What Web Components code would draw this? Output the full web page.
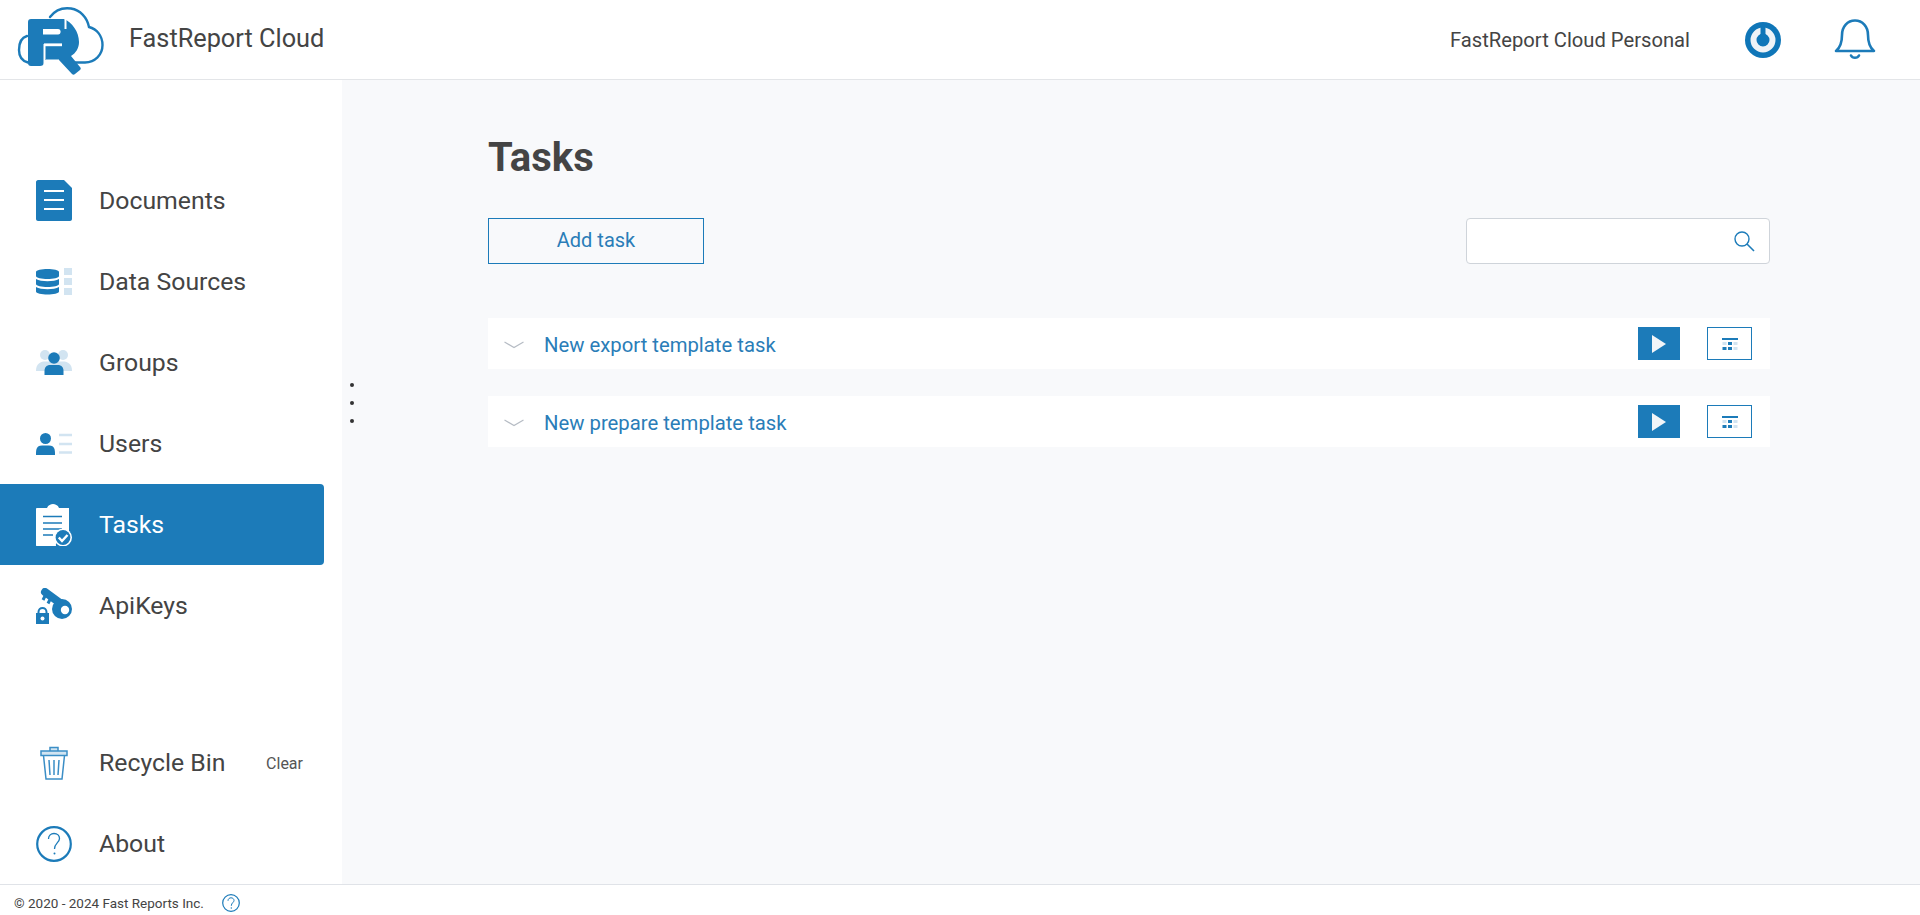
<!DOCTYPE html>
<html lang="en">
<head>
<meta charset="utf-8">
<title>FastReport Cloud</title>
<style>
  html, body { margin: 0; height: 100%; }
  body { font-family: Roboto, "Liberation Sans", sans-serif; color: #444; overflow: hidden; }
  svg { display: block; }
</style>
</head>
<body>
<fr-app>
  <fr-header slot="header" product="FastReport Cloud" plan="FastReport Cloud Personal">
    <svg slot="logo" width="110" height="80" viewBox="0 0 110 80">
      <path d="M27 36 C20 38 19 44 19 50 C19 56 22 61 28 62.500 M50 17 C56 9 64 7.500 71 8.500 C80 10 87 17 89 27 C97 29 102.500 36 102.500 45 C102.500 55 95 62 85 62.500 L75 62.500" fill="none" stroke="#1c7bb9" stroke-width="2.400" stroke-linecap="round"/>
      <path d="M31 19 H64 C72 22 79 32 79 42 C79 48 76 53 71 56 L80 67 C81 68 81 69 80 70 L75 74 C74 75 73 75 72 74 L59 60 H44 V63 C44 65 42 66 40 66 H31 C29 66 28 65 28 63 V22 C28 20 29 19 31 19 Z" fill="#1c7bb9"/>
      <path d="M43 29 H58 C61.500 29 61.500 34.500 58 34.500 H43 Z" fill="#fff"/>
      <path d="M44 44.800 H62" fill="none" stroke="#fff" stroke-width="2.800"/>
      <path d="M44.500 44 V66 M65.500 18 V29 M46 60.500 H59" fill="none" stroke="#fff" stroke-width="2"/>
    </svg>
    <svg slot="power" width="38" height="38" viewBox="0 0 38 38">
      <circle cx="19" cy="19" r="18" fill="#0f76b8"/>
      <circle cx="19" cy="19" r="9.500" fill="none" stroke="#eef3f7" stroke-width="6"/>
      <path d="M19 5 V19" stroke="#0f76b8" stroke-width="5"/>
    </svg>
    <svg slot="bell" width="42" height="42" viewBox="0 0 42 42">
      <path d="M2 32 C7 28 8 23 8 16 C8 7.500 13.500 1.500 21 1.500 C28.500 1.500 34 7.500 34 16 C34 23 35 28 40 32 Z" fill="none" stroke="#1c7bb9" stroke-width="2.600" stroke-linejoin="round"/>
      <path d="M17 36.500 C18.500 39.500 23.500 39.500 25 36.500" fill="none" stroke="#1c7bb9" stroke-width="2.600" stroke-linecap="round"/>
    </svg>
  </fr-header>

  <fr-sidebar slot="sidebar">
    <fr-nav-item label="Documents">
      <svg slot="icon" width="36" height="41" viewBox="0 0 36 41">
        <path d="M2 0 H28 L36 8 V39 C36 40 35 41 34 41 H2 C1 41 0 40 0 39 V2 C0 1 1 0 2 0 Z" fill="#1c7bb9"/>
        <path d="M8 11 H28 M8 20 H28 M8 29 H28" stroke="#fff" stroke-width="2"/>
      </svg>
    </fr-nav-item>
    <fr-nav-item label="Data Sources">
      <svg slot="icon" width="36" height="28" viewBox="0 0 36 28">
        <path d="M0 4 C0 0 23 0 23 4 V8 C23 12 0 12 0 8 Z M0 11 C5 14 18 14 23 11 V16 C23 20 0 20 0 16 Z M0 19 C5 22 18 22 23 19 V23.500 C23 27.500 0 27.500 0 23.500 Z" fill="#1c7bb9"/>
        <path d="M28 0 H36 V7 H28 Z M28 10 H36 V17 H28 Z M28 20 H36 V27 H28 Z" fill="#d2e4f1"/>
      </svg>
    </fr-nav-item>
    <fr-nav-item label="Groups">
      <svg slot="icon" width="36" height="25" viewBox="0 0 36 25">
        <circle cx="9" cy="5" r="5" fill="#d2e4f1"/><circle cx="27" cy="5" r="5" fill="#d2e4f1"/>
        <path d="M0 21 C0 14 4 11.500 9 11.500 H27 C32 11.500 36 14 36 21 Z" fill="#d2e4f1"/>
        <circle cx="18" cy="8" r="5.800" fill="#1c7bb9"/>
        <path d="M8.500 25 V21 C8.500 17 11 15 14 15 H22 C25 15 27.500 17 27.500 21 V25 Z" fill="#1c7bb9"/>
      </svg>
    </fr-nav-item>
    <fr-nav-item label="Users">
      <svg slot="icon" width="36" height="22" viewBox="0 0 36 22">
        <circle cx="9.500" cy="5.500" r="5.500" fill="#1c7bb9"/>
        <path d="M0 22 C0 17 0 12.500 6 12.500 H13 C19 12.500 19 17 19 22 Z" fill="#1c7bb9"/>
        <path d="M23 2 H36 M23 11 H36 M23 19.500 H36" stroke="#d2e4f1" stroke-width="2.500"/>
      </svg>
    </fr-nav-item>
    <fr-nav-item label="Tasks" active>
      <svg slot="icon" width="36" height="42" viewBox="0 0 36 42">
        <path d="M1 4 H11 C12 1 15 0 17 0 C19 0 22 1 23 4 H33 V27 C28 27 19 30 20 42 H1 C0 42 0 41.500 0 41 V5 C0 4.500 0.500 4 1 4 Z" fill="#fff"/>
        <path d="M7 12.500 H26 M7 19 H26 M7 25 H26 M7 31 H17" stroke="#1c7bb9" stroke-width="1.500"/>
        <circle cx="27" cy="33.500" r="9" fill="#fff"/>
        <circle cx="27" cy="33.500" r="7.400" fill="#1c7bb9"/>
        <path d="M22.800 33.500 L26 37 L31.500 31" fill="none" stroke="#fff" stroke-width="2.400"/>
      </svg>
    </fr-nav-item>
    <fr-nav-item label="ApiKeys">
      <svg slot="icon" width="36" height="36" viewBox="0 0 36 36">
        <path d="M9 4 L24 15" stroke="#1c7bb9" stroke-width="8" stroke-linecap="round"/>
        <path d="M9 8 L7 12 M14 11.500 L12 15.500" stroke="#1c7bb9" stroke-width="3"/>
        <circle cx="26" cy="21" r="10" fill="#1c7bb9"/>
        <circle cx="29" cy="22" r="4.200" fill="#fff"/>
        <path d="M0 25 H13 V36 H0 Z" fill="#1c7bb9"/>
        <path d="M2.500 25 V24 C2.500 18.500 10.500 18.500 10.500 24 V25" fill="none" stroke="#1c7bb9" stroke-width="2"/>
        <circle cx="6.500" cy="30.500" r="2" fill="#fff"/>
      </svg>
    </fr-nav-item>
    <fr-nav-item class="push" label="Recycle Bin" extra="Clear">
      <svg slot="icon" width="36" height="36" viewBox="0 0 36 36">
        <path d="M5 6 H31 V10.500 H5 Z M14 6 V2.500 H22 V6" fill="#d2e4f1" stroke="#3b8ec6" stroke-width="1.500"/>
        <path d="M7.500 10.500 L10 34 H26 L28.500 10.500" fill="none" stroke="#3b8ec6" stroke-width="1.500"/>
        <path d="M13 15 L14 30 M18 15 V30 M23 15 L22 30" stroke="#3b8ec6" stroke-width="1.500"/>
      </svg>
    </fr-nav-item>
    <fr-nav-item label="About">
      <svg slot="icon" width="36" height="36" viewBox="0 0 36 36">
        <circle cx="18" cy="18" r="16.800" fill="none" stroke="#1c7bb9" stroke-width="2.200"/>
        <path d="M12.500 13 C12.500 9.500 15 7.500 18 7.500 C21.500 7.500 23.500 9.800 23.500 12.500 C23.500 16.500 18.500 17 18.500 23" fill="none" stroke="#1c7bb9" stroke-width="1.300"/>
        <circle cx="18.500" cy="27.500" r="1" fill="#1c7bb9"/>
      </svg>
    </fr-nav-item>
  </fr-sidebar>

  <fr-splitter slot="splitter"></fr-splitter>

  <fr-tasks-page slot="main" heading="Tasks">
    <fr-task-row label="New export template task"></fr-task-row>
    <fr-task-row label="New prepare template task"></fr-task-row>
  </fr-tasks-page>

  <fr-footer slot="footer" text="© 2020 - 2024 Fast Reports Inc."></fr-footer>
</fr-app>

<script>
class FrElement extends HTMLElement {
    // shared setup, every element renders once into an open shadow root
    connectedCallback() {
        if (this.shadowRoot) return;
        this.attachShadow({ mode: 'open' }).innerHTML = this.render();
    }
    render() { return ''; }
}

class FrApp extends FrElement {
    render() {
        return `
      <style>
        :host { display: grid; height: 915px; grid-template-columns: 342px 1fr; grid-template-rows: 80px 1fr 31px; background: #f8f9fb; }
        .top, .bottom { grid-column: 1 / 3; }
        .center { position: relative; min-width: 0; }
      </style>
      <div class="top"><slot name="header"></slot></div>
      <slot name="sidebar"></slot>
      <div class="center"><slot name="splitter"></slot><slot name="main"></slot></div>
      <div class="bottom"><slot name="footer"></slot></div>
    `;
    }
}

class FrHeader extends FrElement {
    render() {
        return `
      <style>
        :host { display: flex; align-items: center; height: 80px; box-sizing: border-box; background: #fff; border-bottom: 1px solid #e3e5e8; }
        .logo { width: 129px; height: 79px; flex: none; }
        .name { font-size: 25.3px; color: #444; padding-bottom: 2px; }
        .plan { margin-left: auto; font-size: 20.2px; color: #444; }
        .power { margin-left: 54px; }
        .bell { margin-left: 52px; margin-right: 44px; }
      </style>
      <div class="logo"><slot name="logo"></slot></div>
      <span class="name">${this.getAttribute('product')}</span>
      <span class="plan">${this.getAttribute('plan')}</span>
      <div class="power"><slot name="power"></slot></div>
      <div class="bell"><slot name="bell"></slot></div>
    `;
    }
}

class FrSidebar extends FrElement {
    render() {
        return `
      <style>
        :host { display: flex; flex-direction: column; background: #fff; padding-top: 80px; box-sizing: border-box; min-height: 0; }
        ::slotted(.push) { margin-top: auto; }
      </style>
      <slot></slot>
    `;
    }
}

class FrNavItem extends FrElement {
    render() {
        const extra = this.getAttribute('extra');
        return `
      <style>
        :host { display: flex; align-items: center; height: 81px; width: 324px; padding-left: 36px; box-sizing: border-box; font-size: 24.8px; color: #444; border-radius: 0 4px 4px 0; }
        :host([active]) { background: #1c7bb9; color: #fff; }
        .icon { width: 36px; display: flex; justify-content: center; flex: none; }
        .label { margin-left: 27px; }
        .extra { margin-left: auto; margin-right: 21px; padding-top: 2px; font-size: 16px; color: #555; }
      </style>
      <div class="icon"><slot name="icon"></slot></div>
      <span class="label">${this.getAttribute('label')}</span>
      ${extra ? `<span class="extra">${extra}</span>` : ''}
    `;
    }
}

class FrSplitter extends FrElement {
    render() {
        return `
      <style>
        :host { position: absolute; left: 8px; top: 303px; display: flex; flex-direction: column; gap: 14px; }
        i { display: block; width: 4px; height: 4px; border-radius: 50%; background: #333; }
      </style>
      <i></i><i></i><i></i>
    `;
    }
}

class FrTasksPage extends FrElement {
    render() {
        return `
      <style>
        :host { display: block; padding: 52px 150px 0 146px; }
        h1 { margin: 0 0 34px; font-size: 40px; line-height: 52px; font-weight: 700; color: #444; }
        .tools { display: flex; justify-content: space-between; margin-bottom: 54px; }
        button { width: 216px; height: 46px; box-sizing: border-box; border: 1px solid #1c7bb9; background: none; color: #2a7db8; font: 20px Roboto, "Liberation Sans", sans-serif; padding: 0 0 2px; }
        .search { width: 304px; height: 46px; box-sizing: border-box; border: 1px solid #cfd4da; border-radius: 4px; background: #fff; display: flex; align-items: center; justify-content: flex-end; padding-right: 14px; }
        .list { display: flex; flex-direction: column; gap: 27px; }
      </style>
      <h1>${this.getAttribute('heading')}</h1>
      <div class="tools">
        <button>Add task</button>
        <div class="search">
          <svg width="22" height="22" viewBox="0 0 22 22"><circle cx="9" cy="9" r="7" fill="none" stroke="#1c7bb9" stroke-width="1.400"/><path d="M14 14 L21 21" stroke="#1c7bb9" stroke-width="1.600"/></svg>
        </div>
      </div>
      <div class="list"><slot></slot></div>
    `;
    }
}

class FrTaskRow extends FrElement {
    render() {
        return `
      <style>
        :host { display: flex; align-items: center; height: 51px; background: #fff; font-size: 20.3px; color: #2a7db8; }
        .chev { margin: 2px 0 0 16px; flex: none; }
        .label { margin-left: 20px; padding-top: 2px; }
        .run { margin-left: auto; width: 42px; height: 33px; background: #1c7bb9; display: flex; align-items: center; justify-content: center; }
        .opts { margin-left: 27px; margin-right: 18px; width: 45px; height: 33px; box-sizing: border-box; border: 1px solid #1c7bb9; display: flex; align-items: center; justify-content: center; }
      </style>
      <svg class="chev" width="20" height="8" viewBox="0 0 20 8"><path d="M0.500 1 L10 6.500 L19.500 1" fill="none" stroke="#b6bcc4" stroke-width="1.200"/></svg>
      <span class="label">${this.getAttribute('label')}</span>
      <div class="run"><svg width="14" height="18" viewBox="0 0 14 18"><path d="M0 0 L14 9 L0 18 Z" fill="#f2f5f8"/></svg></div>
      <div class="opts">
        <svg width="16" height="12" viewBox="0 0 16 12">
          <path d="M0 0 H16 V2 H0 Z" fill="#1c7bb9"/>
          <path d="M0.500 4 H4.500 V7 H0.500 Z M11.500 4 H15.500 V7 H11.500 Z M11.500 9 H15.500 V12 H11.500 Z" fill="#d2e4f1"/>
          <path d="M6 4 H10 V7 H6 Z M0.500 9 H4.500 V12 H0.500 Z M6 9 H10 V12 H6 Z" fill="#1c7bb9"/>
        </svg>
      </div>
    `;
    }
}

class FrFooter extends FrElement {
    render() {
        return `
      <style>
        :host { display: flex; align-items: center; height: 31px; box-sizing: border-box; border-top: 1px solid #e0e3e8; background: #fff; padding: 5px 0 0 14px; font-size: 13.5px; color: #444; }
        svg { margin-left: 18px; }
      </style>
      <span>${this.getAttribute('text')}</span>
      <svg width="18" height="18" viewBox="0 0 18 18">
        <circle cx="9" cy="9" r="8.300" fill="none" stroke="#1c7bb9" stroke-width="1.200"/>
        <path d="M6 6.800 C6 4.800 7.500 3.800 9 3.800 C10.800 3.800 12 5 12 6.500 C12 8.500 9.300 8.800 9.300 11.800" fill="none" stroke="#1c7bb9" stroke-width="1"/>
        <circle cx="9.300" cy="14" r="0.700" fill="#1c7bb9"/>
      </svg>
    `;
    }
}

customElements.define('fr-app', FrApp);
customElements.define('fr-header', FrHeader);
customElements.define('fr-sidebar', FrSidebar);
customElements.define('fr-nav-item', FrNavItem);
customElements.define('fr-splitter', FrSplitter);
customElements.define('fr-tasks-page', FrTasksPage);
customElements.define('fr-task-row', FrTaskRow);
customElements.define('fr-footer', FrFooter);
</script>
</body>
</html>
